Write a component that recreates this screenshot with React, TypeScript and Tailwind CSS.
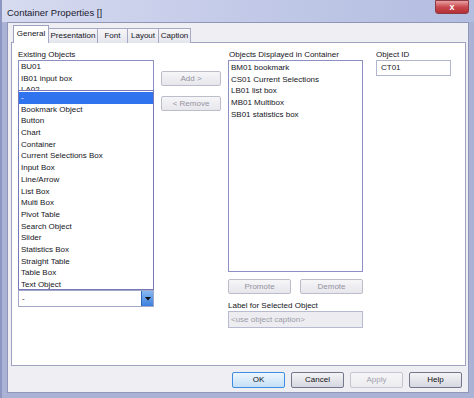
import * as React from 'react';

const existing = ['BU01', 'IB01 input box', 'LA02'];

const dropdownItems = [
  '-',
  'Bookmark Object',
  'Button',
  'Chart',
  'Container',
  'Current Selections Box',
  'Input Box',
  'Line/Arrow',
  'List Box',
  'Multi Box',
  'Pivot Table',
  'Search Object',
  'Slider',
  'Statistics Box',
  'Straight Table',
  'Table Box',
  'Text Object',
];

const displayed = [
  'BM01 bookmark',
  'CS01 Current Selections',
  'LB01 list box',
  'MB01 Multibox',
  'SB01 statistics box',
];

const tabs = [
  { label: 'General', w: 'w-[36px]' },
  { label: 'Presentation', w: 'w-[50px]' },
  { label: 'Font', w: 'w-[31px]' },
  { label: 'Layout', w: 'w-[32px]' },
  { label: 'Caption', w: 'w-[33px]' },
];

function DisabledButton({ children, className = '' }: { children: React.ReactNode; className?: string }) {
  return (
    <div
      className={`h-[15px] flex items-center justify-center rounded-[2px] border border-[#bcbdca] bg-gradient-to-b from-[#f6f6f8] to-[#e6e6ec] text-[#93939f] ${className}`}
    >
      {children}
    </div>
  );
}

function DialogButton({ label, kind }: { label: string; kind: 'default' | 'normal' | 'disabled' }) {
  const styles = {
    default: 'border-[#3d8ee3] from-[#eef6fd] to-[#c4e0f6] text-[#111]',
    normal: 'border-[#74778c] from-[#f4f4f6] to-[#d6d7e0] text-[#111]',
    disabled: 'border-[#c4c6d2] from-[#f6f6f8] to-[#ececf0] text-[#a2a2ae]',
  }[kind];
  return (
    <div
      className={`w-[53px] h-[16px] flex items-center justify-center rounded-[2px] border bg-gradient-to-b ${styles}`}
    >
      {label}
    </div>
  );
}

export default function App() {
  return (
    <div className="w-[474px] h-[398px] flex flex-col bg-[#aab3d6] border-l-2 border-[#8d96c0] font-['Liberation_Sans',Arial,sans-serif] text-[8px] text-[#15151c] overflow-hidden">
      {/* Title bar */}
      <div className="h-[22px] flex items-start bg-gradient-to-r from-[#d7dbf0] via-[#c3cae8] to-[#b3bde0] -ml-[2px] pl-[7px]">
        <span className="mt-[6px] text-[9.5px] text-[#1a1a2e]">Container Properties []</span>
        <div className="ml-auto mr-[5px] w-[34px] h-[14px] flex items-center justify-center rounded-b-[3px] border border-[#8a3b44] bg-gradient-to-b from-[#e8a0a4] via-[#c8484e] to-[#b52f36] text-white text-[9px] font-bold leading-none">
          x
        </div>
      </div>

      {/* Client area */}
      <div className="mx-[5px] mb-[5px] flex-1 flex flex-col bg-[#eeeef3] border border-[#8f96b8] pl-[3px] pr-[2px] pt-[2px]">
        {/* Tabs */}
        <div className="h-[18px] flex items-end pl-[2px] relative z-10">
          {tabs.map((t, i) =>
            i === 0 ? (
              <div
                key={t.label}
                className={`${t.w} h-[18px] flex items-center justify-center bg-white border border-b-0 border-[#9ea2c0] pb-[1px]`}
              >
                {t.label}
              </div>
            ) : (
              <div
                key={t.label}
                className={`${t.w} h-[15px] flex items-center justify-center bg-gradient-to-b from-[#f7f7f9] to-[#e4e4ec] border border-b-0 border-[#a6a9c4] -ml-px`}
              >
                {t.label}
              </div>
            )
          )}
        </div>

        {/* Tab panel */}
        <div className="h-[324px] -mt-px bg-white border border-[#9ea2c0] flex pl-[6px] pt-[6px]">
          {/* Existing objects */}
          <div className="w-[136px] flex flex-col">
            <div className="h-[11px] leading-[11px]">Existing Objects</div>
            <div className="relative flex flex-col">
              <div className="h-[229px] border border-[#8d90c4] overflow-hidden pl-[2px]">
                {existing.map((e) => (
                  <div key={e} className="h-[11.7px] leading-[11.7px] whitespace-nowrap">
                    {e}
                  </div>
                ))}
              </div>
              <div className="mt-[1px] h-[17px] flex border border-[#a4a8c8] bg-white">
                <div className="flex-1 pl-[3px] leading-[15px]">-</div>
                <div className="w-[12px] flex items-center justify-center bg-gradient-to-b from-[#86b8f2] to-[#3d7fdc] border-l border-[#3166b8]">
                  <svg width="6" height="4" viewBox="0 0 6 4">
                    <path d="M0 0 H6 L3 3.5 Z" fill="#111" />
                  </svg>
                </div>
              </div>
              {/* Open dropdown list */}
              <div className="absolute left-0 right-0 top-[30px] h-[200px] bg-white border border-[#7678b8] pt-px">
                {dropdownItems.map((d, i) => (
                  <div
                    key={d}
                    className={`h-[11.7px] leading-[11.7px] pl-[2px] whitespace-nowrap ${
                      i === 0 ? 'bg-[#2f74ee] text-white' : ''
                    }`}
                  >
                    {d}
                  </div>
                ))}
              </div>
            </div>
          </div>

          {/* Add / Remove */}
          <div className="w-[60px] ml-[7px] pt-[22px] flex flex-col gap-[10px]">
            <DisabledButton>Add &gt;</DisabledButton>
            <DisabledButton>&lt; Remove</DisabledButton>
          </div>

          {/* Displayed objects */}
          <div className="w-[135px] ml-[7px] flex flex-col">
            <div className="h-[11px] leading-[11px] pl-px">Objects Displayed in Container</div>
            <div className="h-[212px] border border-[#8d90c4] pl-[2px] pt-px">
              {displayed.map((d) => (
                <div key={d} className="h-[11.7px] leading-[11.7px] whitespace-nowrap">
                  {d}
                </div>
              ))}
            </div>
            <div className="mt-[7px] flex justify-between">
              <DisabledButton className="w-[63px]">Promote</DisabledButton>
              <DisabledButton className="w-[63px]">Demote</DisabledButton>
            </div>
            <div className="mt-[6px] h-[11px] leading-[11px]">Label for Selected Object</div>
            <div className="h-[17px] border border-[#b8bbd0] bg-[#ededf1] pl-[2px] leading-[15px] text-[#9c9ca8]">
              &lt;use object caption&gt;
            </div>
          </div>

          {/* Object ID */}
          <div className="w-[75px] ml-[13px] flex flex-col">
            <div className="h-[11px] leading-[11px]">Object ID</div>
            <div className="h-[16px] border border-[#b2b6cc] pl-[4px] leading-[14px] text-[#222]">CT01</div>
          </div>
        </div>

        {/* Dialog buttons */}
        <div className="mt-[6px] flex justify-end gap-[6px] pr-[4px]">
          <DialogButton label="OK" kind="default" />
          <DialogButton label="Cancel" kind="normal" />
          <DialogButton label="Apply" kind="disabled" />
          <DialogButton label="Help" kind="normal" />
        </div>
      </div>
    </div>
  );
}
